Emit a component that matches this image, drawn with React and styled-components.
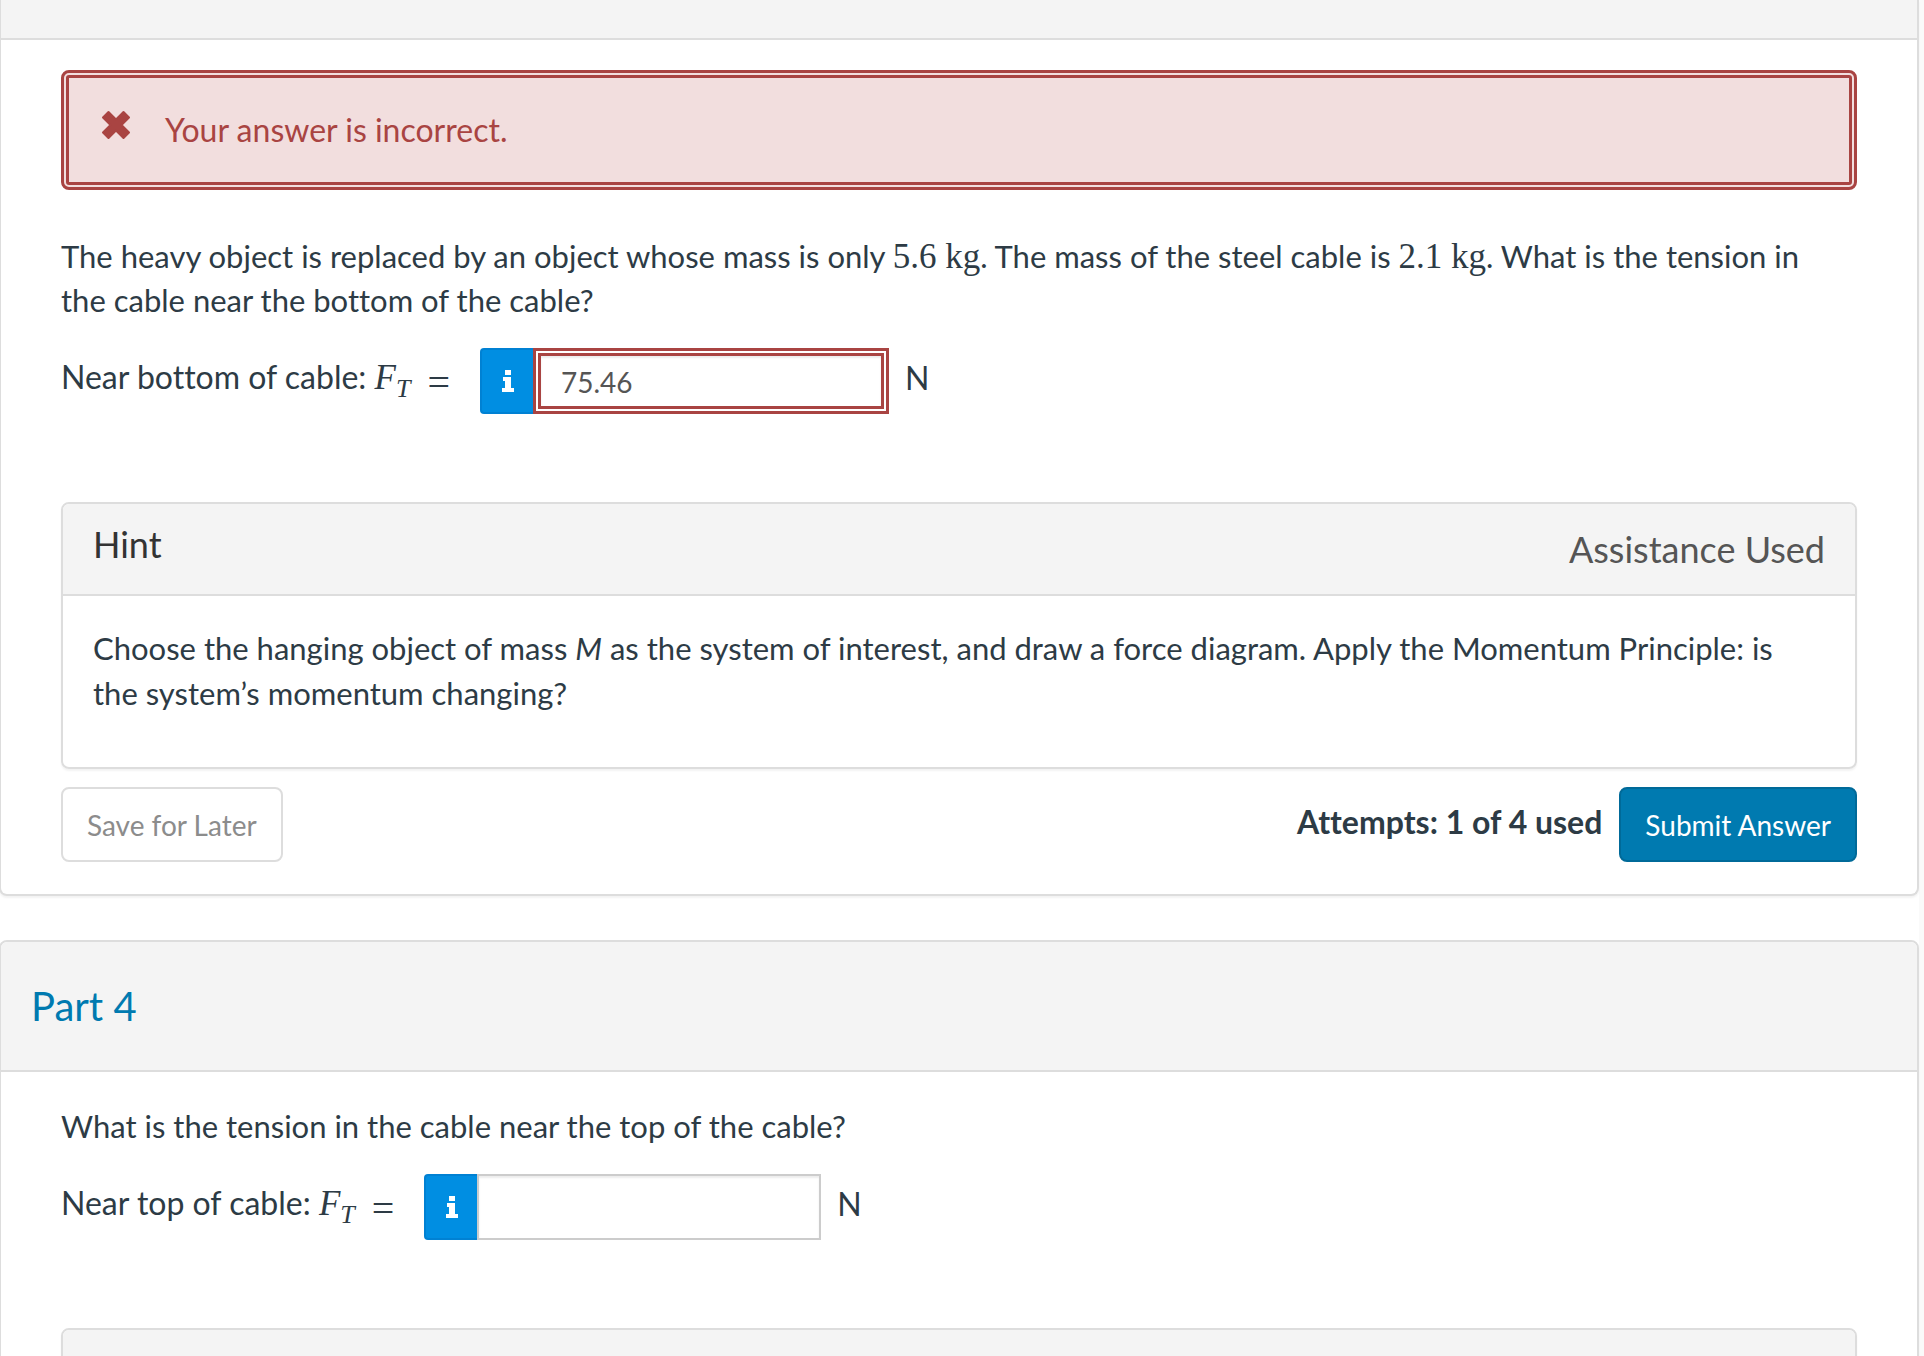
import React, { useState } from "react";
import styled, { createGlobalStyle } from "styled-components";

const GlobalStyle = createGlobalStyle`
  *, *::before, *::after { box-sizing: border-box; }
  body {
    margin: 0;
    background: #fff;
    color: #2d3b45;
    font-family: Lato, "Noto Sans", sans-serif;
    font-size: 32px;
    line-height: 44px;
    font-variant-ligatures: none;
    overflow: hidden;
  }
  h2, h3, p { margin: 0; font-weight: 400; }
  button, input { font-family: inherit; }
`;

const Page = styled.div`
  display: flex;
  background: #fafafa;
  height: 100vh;
  overflow: hidden;
`;

const Column = styled.main`
  flex: 1;
  min-width: 0;
  margin: 0 5px 0 -1px;
  background: #fff;
`;

const Panel = styled.section`
  border: 2px solid #ddd;
  border-radius: 8px;
  box-shadow: 0 2px 2px rgba(0, 0, 0, 0.05);
  background: #fff;
  margin-bottom: ${(p) => (p.$last ? 0 : 44)}px;
  ${(p) => p.$continued && "border-top: 0; border-radius: 0 0 8px 8px;"}
`;

const PanelHeader = styled.header`
  min-height: ${(p) => (p.$short ? 40 : 130)}px;
  padding: 0 30px;
  display: flex;
  align-items: center;
  background: #f4f4f4;
  border-bottom: 2px solid #ddd;
  border-radius: ${(p) => (p.$short ? 0 : 6)}px ${(p) => (p.$short ? 0 : 6)}px 0 0;
`;

const PartTitle = styled.h2`
  color: #007ab0;
  font-size: 40px;
`;

const PanelBody = styled.div`
  padding: ${(p) => (p.$textFirst ? 32 : 30)}px 60px 32px;
`;

const Alert = styled.div`
  display: flex;
  align-items: center;
  gap: 34px;
  height: 120px;
  padding: 0 32px;
  margin-bottom: 44px;
  border: 8px double #a94442;
  border-radius: 8px;
  background: #f2dede;
  color: #a94442;
`;

const CrossIcon = styled.svg`
  width: 30px;
  height: 30px;
  margin-bottom: 10px;
  fill: currentColor;
`;

const Question = styled.p`
  margin-bottom: 26px;
  font-size: 31px;
`;

const MathText = styled.span`
  font-family: "Liberation Serif", serif;
  font-size: 35px;
  line-height: 1;
`;

const AnswerRow = styled.div`
  display: flex;
  align-items: center;
  margin-bottom: 88px;
`;

const AnswerLabel = styled.label`
  padding-bottom: 4px;
  white-space: pre;
`;

const Variable = styled.i`
  font-family: "Liberation Serif", serif;
  font-size: 35px;
  line-height: 1;
`;

const Subscript = styled.sub`
  font-size: 26px;
  line-height: 1;
`;

const Equals = styled.span`
  margin: 0 30px 0 17px;
  font-family: "Liberation Serif", serif;
  font-size: 40px;
  line-height: 1;
  vertical-align: sub;
`;

const InfoButton = styled.button`
  display: grid;
  place-items: center;
  width: 53px;
  height: 66px;
  padding: 0;
  border: 2px solid #0081d3;
  border-right: 0;
  border-radius: 4px 0 0 4px;
  background: #008ee2;
  color: #fff;
`;

const InfoIcon = styled.svg`
  width: 12px;
  height: 22px;
  fill: currentColor;
`;

const AnswerInput = styled.input`
  width: ${(p) => (p.$wrong ? 356 : 344)}px;
  height: 66px;
  padding: 2px 20px 0;
  border: ${(p) => (p.$wrong ? "8px double #a94442" : "2px solid #ccc")};
  border-radius: 0;
  background: #fff;
  box-shadow: inset 0 2px 2px rgba(0, 0, 0, 0.075);
  color: #555;
  font-size: 28px;
  outline: 0;
`;

const Unit = styled.span`
  padding: 0 0 6px 16px;
`;

const HintCard = styled.section`
  margin-bottom: 18px;
  border: 2px solid #ddd;
  border-radius: 8px;
  box-shadow: 0 2px 2px rgba(0, 0, 0, 0.05);
`;

const HintHeader = styled.header`
  display: flex;
  justify-content: space-between;
  min-height: 92px;
  padding: 18px 30px;
  background: #f4f4f4;
  border-bottom: 2px solid #ddd;
  border-radius: 6px 6px 0 0;
  color: #555;
  font-size: 36px;
`;

const HintTitle = styled.h3`
  color: #333;
  font-size: 36px;
`;

const Assistance = styled.span`
  padding-top: 5px;
`;

const HintBody = styled.div`
  padding: 30px 30px 51px;
  font-size: 31px;
  line-height: 45px;
`;

const Actions = styled.div`
  display: flex;
  align-items: center;
`;

const ActionButton = styled.button`
  height: 75px;
  padding: 0 24px;
  border: 2px solid ${(p) => (p.$primary ? "#006a99" : "#ddd")};
  border-radius: 8px;
  background: ${(p) => (p.$primary ? "#007ab0" : "#fff")};
  color: ${(p) => (p.$primary ? "#fff" : "#8c8c8c")};
  font-size: 28px;
`;

const Attempts = styled.strong`
  margin: 0 17px 0 auto;
  padding-bottom: 6px;
`;

function AnswerField({ id, label, initial = "", wrong }) {
  const [value, setValue] = useState(initial);
  return (
    <AnswerRow>
      <AnswerLabel htmlFor={id}>
        {label}{" "}
        <Variable>
          F<Subscript>T</Subscript>
        </Variable>
        <Equals>=</Equals>
      </AnswerLabel>
      <InfoButton type="button" aria-label="Answer information">
        <InfoIcon viewBox="0 0 12 22" aria-hidden="true">
          <path d="M3 0h6v5H3zM1 7h8v11h3v4H0v-4h3v-7H1z" />
        </InfoIcon>
      </InfoButton>
      <AnswerInput id={id} $wrong={wrong} value={value} onChange={(e) => setValue(e.target.value)} />
      <Unit>N</Unit>
    </AnswerRow>
  );
}

export default function App() {
  return (
    <Page>
      <GlobalStyle />
      <Column>
        <Panel $continued>
          <PanelHeader $short />
          <PanelBody>
            <Alert role="alert">
              <CrossIcon viewBox="0 0 30 30" aria-hidden="true">
                <path
                  d="M7.5 2 15 9.5 22.5 2 28 7.5 20.5 15 28 22.5 22.5 28 15 20.5 7.5 28 2 22.5 9.5 15 2 7.5Z"
                  stroke="currentColor"
                  strokeWidth="2"
                  strokeLinejoin="round"
                />
              </CrossIcon>
              <span>Your answer is incorrect.</span>
            </Alert>
            <Question>
              The heavy object is replaced by an object whose mass is only <MathText>5.6 kg</MathText>. The mass of the
              steel cable is <MathText>2.1 kg</MathText>. What is the tension in the&nbsp;cable near the bottom of the
              cable?
            </Question>
            <AnswerField id="bottom" label="Near bottom of cable:" initial="75.46" wrong />
            <HintCard>
              <HintHeader>
                <HintTitle>Hint</HintTitle>
                <Assistance>Assistance Used</Assistance>
              </HintHeader>
              <HintBody>
                <p>
                  Choose the hanging object of mass <i>M</i> as the system of interest, and draw a force diagram. Apply
                  the Momentum Principle: is the&nbsp;system’s momentum changing?
                </p>
              </HintBody>
            </HintCard>
            <Actions>
              <ActionButton type="button">Save for Later</ActionButton>
              <Attempts>Attempts: 1 of 4 used</Attempts>
              <ActionButton type="button" $primary>
                Submit Answer
              </ActionButton>
            </Actions>
          </PanelBody>
        </Panel>
        <Panel $last>
          <PanelHeader>
            <PartTitle>Part 4</PartTitle>
          </PanelHeader>
          <PanelBody $textFirst>
            <Question>What is the tension in the cable near the top of the cable?</Question>
            <AnswerField id="top" label="Near top of cable:" />
            <HintCard>
              <HintHeader />
            </HintCard>
          </PanelBody>
        </Panel>
      </Column>
    </Page>
  );
}
